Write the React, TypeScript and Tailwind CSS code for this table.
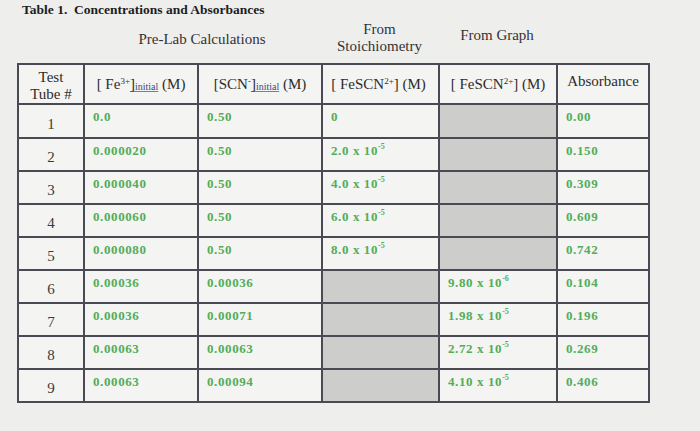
import React from "react";

type Val = React.ReactNode | null;

const Sci = ({ m, e }: { m: string; e: string }) => (
  <>
    {m} x 10
    <sup className="relative -top-[1px] text-[8px] align-super leading-none tracking-normal">{e}</sup>
  </>
);

const rows: { n: string; fe: string; scn: string; st: Val; gr: Val; abs: string }[] = [
  { n: "1", fe: "0.0", scn: "0.50", st: "0", gr: null, abs: "0.00" },
  { n: "2", fe: "0.000020", scn: "0.50", st: <Sci m="2.0" e="-5" />, gr: null, abs: "0.150" },
  { n: "3", fe: "0.000040", scn: "0.50", st: <Sci m="4.0" e="-5" />, gr: null, abs: "0.309" },
  { n: "4", fe: "0.000060", scn: "0.50", st: <Sci m="6.0" e="-5" />, gr: null, abs: "0.609" },
  { n: "5", fe: "0.000080", scn: "0.50", st: <Sci m="8.0" e="-5" />, gr: null, abs: "0.742" },
  { n: "6", fe: "0.00036", scn: "0.00036", st: null, gr: <Sci m="9.80" e="-6" />, abs: "0.104" },
  { n: "7", fe: "0.00036", scn: "0.00071", st: null, gr: <Sci m="1.98" e="-5" />, abs: "0.196" },
  { n: "8", fe: "0.00063", scn: "0.00063", st: null, gr: <Sci m="2.72" e="-5" />, abs: "0.269" },
  { n: "9", fe: "0.00063", scn: "0.00094", st: null, gr: <Sci m="4.10" e="-5" />, abs: "0.406" },
];

const cell = "border-r-2 border-b-2 border-[#4a4954] bg-[#f4f4f3]";
const grayCell = "border-r-2 border-b-2 border-[#4a4954] bg-[#cdcdcc]";
const dataText =
  "pl-[8px] pt-[4px] text-[13px] leading-[16px] font-bold tracking-[0.6px] text-[#52ad59]";

function Data({ v }: { v: Val }) {
  if (v === null) return <div className={grayCell} />;
  return (
    <div className={cell}>
      <div className={dataText}>{v}</div>
    </div>
  );
}

const Initial = () => (
  <span className="underline decoration-[#5b80d8] decoration-1 underline-offset-2">
    ]<sub className="text-[10px] text-[#3b4780] align-baseline relative top-[1px]">initial</sub>
  </span>
);

export default function App() {
  return (
    <div
      className="w-[700px] h-[431px] overflow-hidden bg-[#eeeeed] text-[#2c2c2c]"
      style={{ fontFamily: '"Liberation Serif", "DejaVu Serif", serif' }}
    >
      <div className="h-[20px] pl-[22px] leading-[20px] text-[13.5px] font-bold text-[#1d1d1d] whitespace-pre">
        Table 1.  Concentrations and Absorbances
      </div>

      <div className="ml-[17px] h-[43px] grid grid-cols-[66px_114px_124px_117px_118px_92px] text-[15px] leading-[17px] text-[#333]">
        <div />
        <div className="col-span-2 pt-[11px] text-center">Pre-Lab Calculations</div>
        <div className="pt-[1px] text-center">
          From
          <br />
          Stoichiometry
        </div>
        <div className="pt-[7px] text-center">From Graph</div>
        <div />
      </div>

      <div className="ml-[17px] inline-grid grid-cols-[66px_114px_124px_117px_118px_92px] grid-rows-[40px_34px_repeat(8,33px)] border-l-2 border-t-2 border-[#4a4954]">
        <div className={`${cell} flex items-center justify-center text-center text-[15px] leading-[17px] pt-[4px]`}>
          <div>
            Test
            <br />
            Tube #
          </div>
        </div>
        <div className={`${cell} flex items-center justify-center text-[15px] whitespace-nowrap`}>
          <span>
            [ Fe<sup className="text-[9px]">3+</sup>
            <Initial /> (M)
          </span>
        </div>
        <div className={`${cell} flex items-center justify-center text-[15px] whitespace-nowrap`}>
          <span>
            [SCN<sup className="text-[9px]">-</sup>
            <Initial /> (M)
          </span>
        </div>
        <div className={`${cell} flex items-center justify-center text-[15px] whitespace-nowrap pr-[4px]`}>
          <span>
            [ FeSCN<sup className="text-[9px]">2+</sup>] (M)
          </span>
        </div>
        <div className={`${cell} flex items-center justify-center text-[15px] whitespace-nowrap`}>
          <span>
            [ FeSCN<sup className="text-[9px]">2+</sup>] (M)
          </span>
        </div>
        <div className={`${cell} flex items-center justify-center text-[15px] pb-[6px]`}>
          Absorbance
        </div>

        {rows.map((r) => (
          <React.Fragment key={r.n}>
            <div className={`${cell} flex items-center justify-center pt-[6px] text-[15px] text-[#3a3a3a]`}>
              {r.n}
            </div>
            <Data v={r.fe} />
            <Data v={r.scn} />
            <Data v={r.st} />
            <Data v={r.gr} />
            <Data v={r.abs} />
          </React.Fragment>
        ))}
      </div>
    </div>
  );
}
